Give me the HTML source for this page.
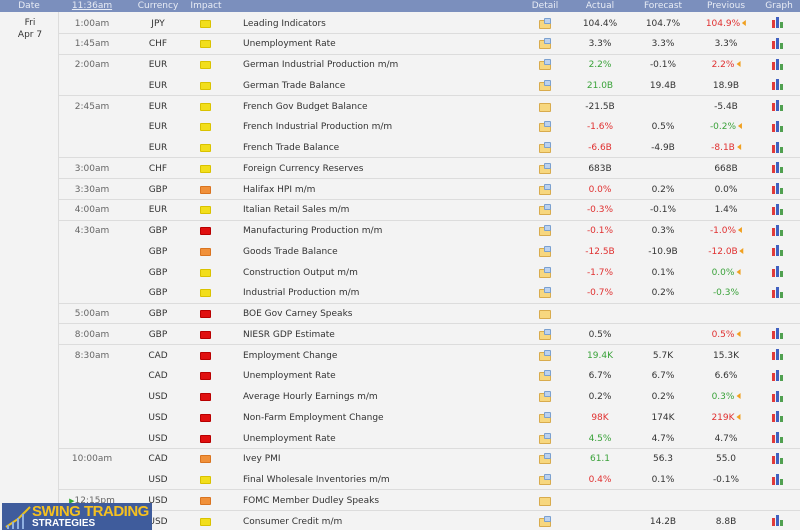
<!DOCTYPE html><html><head><meta charset="utf-8"><style>
*{margin:0;padding:0;box-sizing:border-box}
body{width:800px;height:530px;overflow:hidden;background:#f3f3f3;font-family:"DejaVu Sans","Liberation Sans",sans-serif;font-size:9px;color:#333;position:relative}
.hd{position:absolute;left:0;top:0;width:800px;height:12px;background:#7b8fbd;color:#e8ecf5;font-size:9px}
.hd span{position:absolute;top:0;line-height:12px;transform:translateX(-50%)}
.c{position:absolute;white-space:nowrap;line-height:12px}
.m{transform:translateX(-50%)}
.sep{position:absolute;left:58px;width:742px;height:1px;background:#dcdcdc}
.imp{position:absolute;width:11px;height:8px;border-radius:1px}
.y{background:#f2de1c;border:1px solid #d9c200}.o{background:#f0903a;border:1px solid #d97420}.r{background:#e01010;border:1px solid #b80000}
.fold{position:absolute;width:12px;height:9px;background:#f7d77f;border:1px solid #d8ab4d;border-radius:1px}
.fold i{position:absolute;right:-1px;top:-3px;width:7px;height:6px;background:#bcd2ef;border:1px solid #7aa0d0;border-radius:1px}
.gr{position:absolute;width:12px;height:11px}
.gr b{position:absolute;bottom:0;width:3px}
.g{color:#3aa23a}.rd{color:#e03030}
.tri{display:inline-block;width:0;height:0;border-top:3px solid transparent;border-bottom:3px solid transparent;border-right:4px solid #f0a020;margin-left:2px;vertical-align:0}
</style></head><body>
<div class="hd"><span style="left:29px">Date</span><span style="left:92px;text-decoration:underline">11:36am</span><span style="left:158px">Currency</span><span style="left:206px">Impact</span><span style="left:545px">Detail</span><span style="left:600px">Actual</span><span style="left:663px">Forecast</span><span style="left:726px">Previous</span><span style="left:779px">Graph</span></div>
<div style="position:absolute;left:58px;top:12px;width:1px;height:518px;background:#dcdcdc"></div>
<div class="c m" style="left:30px;top:17px">Fri</div><div class="c m" style="left:30px;top:29px">Apr 7</div>
<div id="rows"></div>
<div style="position:absolute;left:2px;top:503px;width:150px;height:27px;background:#3f5c9c;overflow:hidden">
<svg style="position:absolute;left:2px;top:2px" width="28" height="24"><path d="M2 22 L8 18 L14 14 L20 8 L26 2" stroke="#e8c020" stroke-width="2" fill="none"/><g fill="#8fb0e0"><rect x="3" y="20" width="2" height="4"/><rect x="8" y="17" width="2" height="7"/><rect x="13" y="13" width="2" height="11"/><rect x="18" y="9" width="2" height="15"/></g></svg>
<div class="c" style="left:30px;top:1px;font:bold 15px 'Liberation Sans',sans-serif;color:#f5c020;line-height:15px;letter-spacing:-0.5px">SWING TRADING</div>
<div class="c" style="left:30px;top:15px;font:bold 10px 'Liberation Sans',sans-serif;color:#fff;line-height:11px">STRATEGIES</div>
</div>
<script>
var R=[
["1:00am","JPY","y","Leading Indicators","104.4%","104.7%","r104.9%",1],
["1:45am","CHF","y","Unemployment Rate","3.3%","3.3%","3.3%",1],
["2:00am","EUR","y","German Industrial Production m/m","g2.2%","-0.1%","r2.2%",0],
["","EUR","y","German Trade Balance","g21.0B","19.4B","18.9B",1],
["2:45am","EUR","y","French Gov Budget Balance","-21.5B","","-5.4B",0],
["","EUR","y","French Industrial Production m/m","r-1.6%","0.5%","g-0.2%",0],
["","EUR","y","French Trade Balance","r-6.6B","-4.9B","r-8.1B",1],
["3:00am","CHF","y","Foreign Currency Reserves","683B","","668B",1],
["3:30am","GBP","o","Halifax HPI m/m","r0.0%","0.2%","0.0%",1],
["4:00am","EUR","y","Italian Retail Sales m/m","r-0.3%","-0.1%","1.4%",1],
["4:30am","GBP","r","Manufacturing Production m/m","r-0.1%","0.3%","r-1.0%",0],
["","GBP","o","Goods Trade Balance","r-12.5B","-10.9B","r-12.0B",0],
["","GBP","y","Construction Output m/m","r-1.7%","0.1%","g0.0%",0],
["","GBP","y","Industrial Production m/m","r-0.7%","0.2%","g-0.3%",1],
["5:00am","GBP","r","BOE Gov Carney Speaks","","","",1],
["8:00am","GBP","r","NIESR GDP Estimate","0.5%","","r0.5%",1],
["8:30am","CAD","r","Employment Change","g19.4K","5.7K","15.3K",0],
["","CAD","r","Unemployment Rate","6.7%","6.7%","6.6%",0],
["","USD","r","Average Hourly Earnings m/m","0.2%","0.2%","g0.3%",0],
["","USD","r","Non-Farm Employment Change","r98K","174K","r219K",0],
["","USD","r","Unemployment Rate","g4.5%","4.7%","4.7%",1],
["10:00am","CAD","o","Ivey PMI","g61.1","56.3","55.0",0],
["","USD","y","Final Wholesale Inventories m/m","r0.4%","0.1%","-0.1%",1],
["12:15pm","USD","o","FOMC Member Dudley Speaks","","","",1],
["","USD","y","Consumer Credit m/m","","14.2B","8.8B",0]];
var tri={"104.9%":1,"2.2%":1,"-0.2%":1,"-8.1B":1,"-1.0%":1,"-12.0B":1,"0.0%":1,"0.5%":1,"0.3%":1,"219K":1};
function v(s,isPrev){if(!s)return"";var c="";if(s[0]=="g"){c="g";s=s.slice(1)}else if(s[0]=="r"){c="rd";s=s.slice(1)}
var t=(isPrev&&c&&tri[s])?'<span class="tri"></span>':'';return '<span class="'+c+'">'+s+'</span>'+t}
var h="";
R.forEach(function(r,i){var y=12+i*20.75,ty=y+5.5;
h+='<div class="c m" style="left:92px;top:'+ty+'px;color:#666">'+(r[0]=="12:15pm"?'<span style="color:#3a3;font-size:7px">▶</span>':'')+r[0]+'</div>';
h+='<div class="c m" style="left:158px;top:'+ty+'px">'+r[1]+'</div>';
h+='<div class="imp '+r[2]+'" style="left:200px;top:'+(y+7.5)+'px"></div>';
h+='<div class="c" style="left:243px;top:'+ty+'px">'+r[3]+'</div>';
h+='<div class="fold" style="left:539px;top:'+(y+7.5)+'px">'+(i==4||i>=14&&!r[4]&&i!=24?'':'<i></i>')+'</div>';
h+='<div class="c m" style="left:600px;top:'+ty+'px">'+v(r[4])+'</div>';
h+='<div class="c m" style="left:663px;top:'+ty+'px">'+r[5]+'</div>';
h+='<div class="c m" style="left:726px;top:'+ty+'px">'+v(r[6],1)+'</div>';
if(r[3].indexOf("Speaks")<0)h+='<div class="gr" style="left:772px;top:'+(y+5)+'px"><b style="left:0;height:8px;background:#e03a3a"></b><b style="left:4px;height:11px;background:#4060c0"></b><b style="left:8px;height:6px;background:#50a050"></b></div>';
if(r[7])h+='<div class="sep" style="top:'+Math.round(y+20.75)+'px"></div>';
});
document.getElementById("rows").innerHTML=h;
</script>
</body></html>
